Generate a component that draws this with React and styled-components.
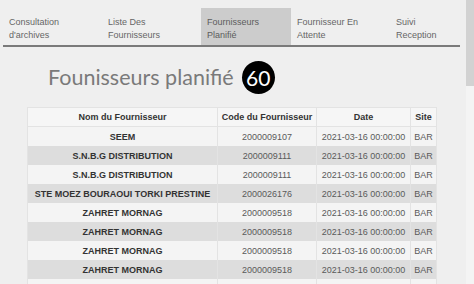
import React from "react";
import styled, { createGlobalStyle } from "styled-components";

const GlobalStyle = createGlobalStyle`
  html, body { margin: 0; padding: 0; }
  body {
    background: #efefef;
    overflow: hidden;
    font-family: "Liberation Sans", Arial, sans-serif;
  }
`;

const Page = styled.div`
  display: flex;
  width: 474px;
  height: 284px;
  overflow: hidden;
`;

const Main = styled.div`
  flex: 1;
  padding: 8px 0 0 3px;
  display: flex;
  flex-direction: column;
  min-height: 0;
  overflow: hidden;
`;

const Nav = styled.nav`
  display: flex;
  flex-shrink: 0;
  width: 457px;
  border-bottom: 2px solid #7a7a7a;
`;

const Tab = styled.div`
  width: ${(p) => p.$w}px;
  flex: ${(p) => (p.$w ? "none" : "1")};
  box-sizing: border-box;
  padding: 8px 6px 7px;
  height: 37px;
  font-size: 9px;
  line-height: 13px;
  color: ${(p) => (p.$active ? "#5c5c5c" : "#666")};
  background: ${(p) => (p.$active ? "#cccccc" : "transparent")};
`;

const TitleRow = styled.div`
  display: flex;
  flex-shrink: 0;
  align-items: center;
  height: 60px;
  padding-left: 45px;
  gap: 8px;
`;

const Title = styled.h1`
  margin: 0;
  font-family: Lato, "Open Sans", sans-serif;
  font-weight: 400;
  font-size: 21.5px;
  color: #7a7a7a;
`;

const Badge = styled.span`
  display: flex;
  align-items: center;
  justify-content: center;
  width: 33px;
  height: 33px;
  border-radius: 50%;
  background: #000;
  color: #fff;
  font-family: Lato, "Open Sans", sans-serif;
  font-size: 21px;
  margin-top: 1px;
`;

const Table = styled.table`
  flex-shrink: 0;
  margin-left: 24px;
  border-collapse: collapse;
  table-layout: fixed;
  width: 409px;
  font-size: 9px;
`;

const Th = styled.th`
  height: 18px;
  padding: 0;
  font-weight: bold;
  color: #333;
  text-align: center;
  border: 1px solid #e3e3e3;
  white-space: nowrap;
  overflow: hidden;
`;

const Tr = styled.tr`
  background: ${(p) => (p.$alt ? "#dddddd" : "#f4f4f4")};
`;

const HeadTr = styled.tr`
  background: #f6f6f6;
`;

const Td = styled.td`
  height: 19px;
  padding: 0;
  text-align: center;
  border-left: 1px solid #e3e3e3;
  border-right: 1px solid #e3e3e3;
  color: ${(p) => (p.$bold ? "#333" : "#5a5a5a")};
  font-weight: ${(p) => (p.$bold ? "bold" : "normal")};
  white-space: nowrap;
  overflow: hidden;
`;

const Scrollbar = styled.div`
  width: 8px;
  background: #f4f4f4;
  display: flex;
  flex-direction: column;
`;

const Thumb = styled.div`
  height: 86px;
  background: #d2d2d2;
`;

const tabs = [
  { label: ["Consultation", "d'archives"], w: 99 },
  { label: ["Liste Des", "Fournisseurs"], w: 99 },
  { label: ["Fournisseurs", "Planifié"], w: 90, active: true },
  { label: ["Fournisseur En", "Attente"], w: 99 },
  { label: ["Suivi", "Reception"] },
];

const rows = [
  ["SEEM", "2000009107"],
  ["S.N.B.G DISTRIBUTION", "2000009111"],
  ["S.N.B.G DISTRIBUTION", "2000009111"],
  ["STE MOEZ BOURAOUI TORKI PRESTINE", "2000026176"],
  ["ZAHRET MORNAG", "2000009518"],
  ["ZAHRET MORNAG", "2000009518"],
  ["ZAHRET MORNAG", "2000009518"],
  ["ZAHRET MORNAG", "2000009518"],
  ["ZAHRET MORNAG", "2000009518"],
];

export default function App() {
  return (
    <>
      <GlobalStyle />
      <Page>
        <Main>
          <Nav>
            {tabs.map((t, i) => (
              <Tab key={i} $w={t.w} $active={t.active}>
                {t.label[0]}
                <br />
                {t.label[1]}
              </Tab>
            ))}
          </Nav>
          <TitleRow>
            <Title>Founisseurs planifié</Title>
            <Badge>60</Badge>
          </TitleRow>
          <Table>
            <colgroup>
              <col style={{ width: 190 }} />
              <col style={{ width: 99 }} />
              <col style={{ width: 94 }} />
              <col style={{ width: 26 }} />
            </colgroup>
            <thead>
              <HeadTr>
                <Th>Nom du Fournisseur</Th>
                <Th>Code du Fournisseur</Th>
                <Th>Date</Th>
                <Th>Site</Th>
              </HeadTr>
            </thead>
            <tbody>
              {rows.map((r, i) => (
                <Tr key={i} $alt={i % 2 === 1}>
                  <Td $bold>{r[0]}</Td>
                  <Td>{r[1]}</Td>
                  <Td>2021-03-16 00:00:00</Td>
                  <Td>BAR</Td>
                </Tr>
              ))}
            </tbody>
          </Table>
        </Main>
        <Scrollbar>
          <Thumb />
        </Scrollbar>
      </Page>
    </>
  );
}
